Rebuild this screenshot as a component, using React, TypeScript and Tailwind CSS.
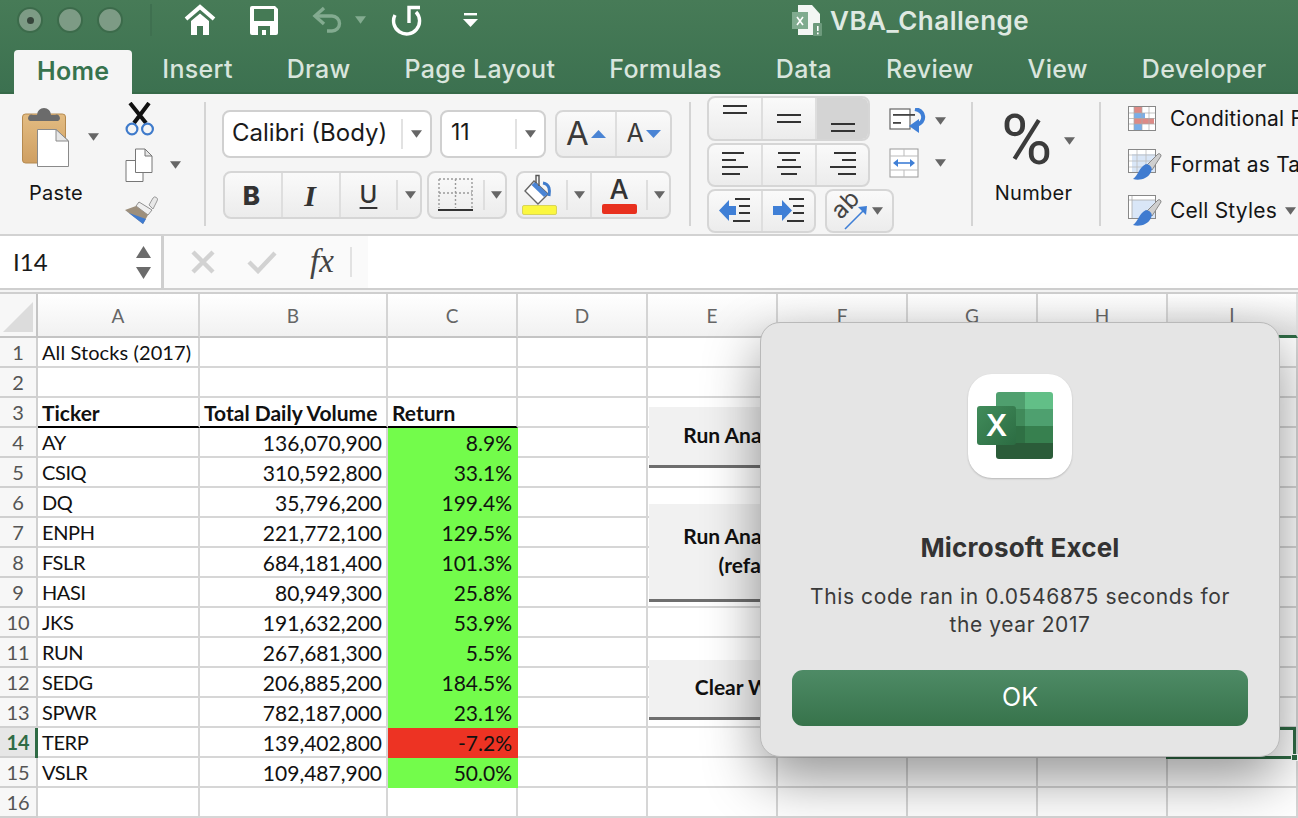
import React from "react";

const ui = "font-['Inter','Liberation_Sans',sans-serif]";
const btn = "flex border-2 border-[#d6d6d6] rounded-[8px] bg-gradient-to-b from-[#fafafa] to-[#ececec]";
const seg = "flex items-center justify-center border-r-2 border-[#dedede] h-full";

function Caret({ c = "#666666", w = 11, h = 8 }: { c?: string; w?: number; h?: number }) {
  return (
    <svg width={w} height={h} viewBox="0 0 10 7" className="shrink-0">
      <path d="M0 0H10L5 7Z" fill={c} />
    </svg>
  );
}

function Home() {
  return (
    <svg width="34" height="32" viewBox="0 0 34 32">
      <path d="M3 15L17 3L31 15" stroke="#fff" strokeWidth="4" fill="none" />
      <path d="M8 17L17 9.5L26 17V31H20V22H14V31H8Z" fill="#fff" />
    </svg>
  );
}
function Save() {
  return (
    <svg width="28" height="29" viewBox="0 0 28 29">
      <path d="M2 0H25L28 3V27A2 2 0 0 1 26 29H2A2 2 0 0 1 0 27V2A2 2 0 0 1 2 0Z" fill="#fff" />
      <rect x="4" y="3" width="20" height="12" fill="#457a55" />
      <path d="M8 29V20H20V29H16V24H12V29Z" fill="#457a55" />
    </svg>
  );
}
function Undo() {
  return (
    <svg width="32" height="28" viewBox="0 0 32 28" fill="none" stroke="#83ab90" strokeWidth="3.4">
      <path d="M12 2L3 10L12 18" />
      <path d="M3 10H20A7.5 7.5 0 0 1 20 25H15" />
    </svg>
  );
}
function Redo() {
  return (
    <svg width="32" height="32" viewBox="0 0 32 32" fill="none" stroke="#fff" strokeWidth="3.4">
      <path d="M4 11A13 13 0 1 0 25 8" />
      <path d="M18 19L18 3.5H29" />
    </svg>
  );
}
function Customize() {
  return (
    <svg width="15" height="15" viewBox="0 0 15 15" fill="#fff">
      <rect x="1" y="0" width="13" height="2.4" />
      <path d="M0 6H15L7.5 14Z" />
    </svg>
  );
}
function DocIcon() {
  return (
    <svg width="32" height="32" viewBox="0 0 32 32">
      <path d="M6 0H20L28 9V30H6Z" fill="#f3f6f4" />
      <rect x="0" y="7" width="16" height="17" fill="#80ab8f" />
      <path d="M5 12L11 20M11 12L5 20" stroke="#fff" strokeWidth="1.6" />
      <rect x="21" y="18" width="9" height="13" rx="1" fill="#6d9a7c" />
      <rect x="25" y="21" width="1.6" height="5" fill="#fff" />
      <rect x="25" y="27.5" width="1.6" height="1.8" fill="#fff" />
    </svg>
  );
}
function Clipboard() {
  return (
    <svg width="48" height="60" viewBox="0 0 48 60">
      <defs>
        <linearGradient id="cb" x1="0" y1="0" x2="0" y2="1">
          <stop offset="0" stopColor="#e3bc82" />
          <stop offset="1" stopColor="#cf9f62" />
        </linearGradient>
      </defs>
      <rect x="0.5" y="7" width="43" height="49" rx="3" fill="url(#cb)" stroke="#b58a50" />
      <path d="M8 14A3 3 0 0 1 11 8H15A7 7 0 0 1 29 8H33A3 3 0 0 1 36 14Z" fill="#6b6b6b" />
      <path d="M15.5 22.5H34L46.5 34V59.5H15.5Z" fill="#fff" stroke="#8a8a8a" />
      <path d="M34 22.5V34H46.5Z" fill="#e6e6e6" stroke="#8a8a8a" />
    </svg>
  );
}
function Scissors() {
  return (
    <svg width="30" height="34" viewBox="0 0 30 34" fill="none">
      <path d="M5 1L21 21M24 1L9 21" stroke="#111" strokeWidth="4" />
      <circle cx="7" cy="27" r="5.4" stroke="#3f7bcb" strokeWidth="2.2" />
      <circle cx="22.5" cy="27" r="5.4" stroke="#3f7bcb" strokeWidth="2.2" />
    </svg>
  );
}
function Copy() {
  return (
    <svg width="28" height="34" viewBox="0 0 28 34">
      <path d="M1 12.5H14L18 16V33.5H1Z" fill="#fff" stroke="#777" />
      <path d="M10.5 1H20L27 8V24.5H10.5Z" fill="#fff" stroke="#777" />
      <path d="M20 1V8H27Z" fill="#e6e6e6" stroke="#777" />
    </svg>
  );
}
function Brush() {
  return (
    <svg width="34" height="30" viewBox="0 0 34 30">
      <path d="M25 10L29 3A2.5 2.5 0 0 1 33 6L29 14Z" fill="#e8e8e8" stroke="#9a9a9a" />
      <path d="M15 7L28 15L24 20L12 11Z" fill="#efefef" stroke="#8f8f8f" />
      <path d="M12 11L24 20L19 29L1 15Z" fill="#9d8f7c" />
      <path d="M5 18L22 24L19 29L1 15Z" fill="#3f7bd0" />
    </svg>
  );
}
function Borders() {
  return (
    <svg width="35" height="34" viewBox="0 0 35 34" fill="none">
      <path d="M1 1H34V30M1 1V30M17.5 1V30M1 15H34" stroke="#9a9a9a" strokeWidth="1.4" strokeDasharray="2 2" />
      <rect x="0" y="31" width="35" height="2" fill="#333" />
    </svg>
  );
}
function Bucket() {
  return (
    <svg width="36" height="36" viewBox="0 0 36 36">
      <path d="M13 7L27 20L17 30L4 17Z" fill="#fff" stroke="#666" strokeWidth="1.4" />
      <path d="M10.5 11L23 23L27 20L14 8Z" fill="#4a84d4" />
      <path d="M15 9L15 1.5H18V12" fill="none" stroke="#555" strokeWidth="1.4" />
      <path d="M22 9C29 10 29 17 28 22" stroke="#3f7bcb" strokeWidth="3" fill="none" />
    </svg>
  );
}
function AlignV({ y }: { y: number }) {
  return (
    <svg width="28" height="34" viewBox="0 0 28 34" fill="#333">
      <rect x="2" y={y} width="24" height="2" />
      <rect x="2" y={y + 7} width="24" height="2" />
    </svg>
  );
}
function AlignH({ a }: { a: number[][] }) {
  return (
    <svg width="28" height="30" viewBox="0 0 28 30" fill="#333">
      {a.map(([x, w], i) => (
        <rect key={i} x={x} y={2 + i * 7} width={w} height="2" />
      ))}
    </svg>
  );
}
function Indent({ flip }: { flip?: boolean }) {
  return (
    <svg width="32" height="28" viewBox="0 0 32 28">
      <path d={flip ? "M9 3L19 13.5L9 24V18H0V9H9Z" : "M10 3L0 13.5L10 24V18H17V9H10Z"} fill="#3f7fd6" />
      <g fill="#333">
        <rect x="16" y="1" width="15" height="2" />
        <rect x="20" y="8" width="11" height="2" />
        <rect x="20" y="15" width="11" height="2" />
        <rect x="14" y="23" width="17" height="2" />
      </g>
    </svg>
  );
}
function Orientation() {
  return (
    <svg width="36" height="38" viewBox="0 0 36 38" fill="none" className="overflow-visible">
      <text x="12" y="20" textAnchor="middle" fontSize="24" fill="#444" transform="rotate(-45 12 13)" className="font-['Inter',sans-serif]">ab</text>
      <path d="M11 37L31 17" stroke="#3f7fd6" strokeWidth="1.6" />
      <path d="M24 15L33 14L32 23Z" fill="#3f7fd6" />
    </svg>
  );
}
function Wrap() {
  return (
    <svg width="38" height="26" viewBox="0 0 38 26" fill="none">
      <rect x="1" y="1" width="20" height="20" fill="#fff" stroke="#666" strokeWidth="1.2" />
      <rect x="4" y="6" width="22" height="1.8" fill="#444" />
      <rect x="4" y="14" width="8" height="1.8" fill="#444" />
      <path d="M26 1C36 3 37 13 28 17" stroke="#3f7fd6" strokeWidth="4" />
      <path d="M30 11L20 18L30 25Z" fill="#3f7fd6" />
    </svg>
  );
}
function Merge() {
  return (
    <svg width="30" height="30" viewBox="0 0 30 30" fill="none">
      <rect x="1" y="1" width="28" height="28" fill="#fff" stroke="#999" />
      <path d="M15 1V8M15 22V29M1 8H29M1 22H29" stroke="#bbb" />
      <path d="M6 15H24" stroke="#3f7fd6" strokeWidth="1.6" />
      <path d="M9 11L4 15L9 19ZM21 11L26 15L21 19Z" fill="#3f7fd6" />
    </svg>
  );
}
function Conditional() {
  return (
    <svg width="30" height="26" viewBox="0 0 30 26" fill="none">
      <rect x="0.5" y="0.5" width="27" height="24" fill="#fff" stroke="#888" />
      <rect x="6" y="1" width="8" height="6" fill="#dd8a86" />
      <rect x="6" y="7" width="11" height="6" fill="#7aaee8" />
      <rect x="6" y="12" width="20" height="6" fill="#dd8a86" />
      <rect x="6" y="18" width="8" height="6" fill="#7aaee8" />
      <path d="M6 1V24M14 1V24M21 1V24M1 7H27M1 12.5H27M1 18H27" stroke="#aaa" strokeWidth="0.7" />
    </svg>
  );
}
function TableBrush({ grid }: { grid?: boolean }) {
  return (
    <svg width="34" height="32" viewBox="0 0 34 32" fill="none">
      <rect x="0.5" y="0.5" width="27" height="23" fill="#fff" stroke="#888" />
      <rect x="4" y="5" width="23" height="18" fill="#d9e6f7" />
      {grid ? <path d="M9 1V23M18 1V23M1 6H27M1 12H27M1 18H27" stroke="#bbb" strokeWidth="0.8" /> : <path d="M1 5H27M4 1V23" stroke="#aaa" strokeWidth="0.8" />}
      <path d="M19 16L30 5A2 2 0 0 1 33 7L24 21Z" fill="#cfcfcf" stroke="#888" />
      <path d="M18 15C23 16 25 19 23 23C20 30 11 32 5 30C10 27 11 18 18 15Z" fill="#3f7bd0" />
    </svg>
  );
}
function ExcelIcon() {
  return (
    <svg width="104" height="104" viewBox="0 0 104 104">
      <defs>
        <linearGradient id="xb" x1="0" y1="0" x2="1" y2="1">
          <stop offset="0" stopColor="#418c5b" />
          <stop offset="1" stopColor="#2c6c42" />
        </linearGradient>
      </defs>
      <path d="M31 18H57V35H28V21A3 3 0 0 1 31 18Z" fill="#4f9f6e" />
      <path d="M57 18H82A3 3 0 0 1 85 21V35H57Z" fill="#62bf87" />
      <rect x="28" y="35" width="29" height="17" fill="#408a5a" />
      <rect x="57" y="35" width="28" height="17" fill="#4ea06f" />
      <rect x="28" y="52" width="29" height="17" fill="#2f7044" />
      <rect x="57" y="52" width="28" height="17" fill="#37804f" />
      <path d="M28 69H85V82A3 3 0 0 1 82 85H31A3 3 0 0 1 28 82Z" fill="#2b5c39" />
      <rect x="9" y="32" width="39" height="39" rx="3" fill="url(#xb)" />
      <text x="28.5" y="62" textAnchor="middle" fontSize="30" fontWeight="600" fill="#fff" className="font-['Inter',sans-serif]">X</text>
    </svg>
  );
}

const tabs = ["Insert", "Draw", "Page Layout", "Formulas", "Data", "Review", "View", "Developer"];
const cols = ["A", "B", "C", "D", "E", "F", "G", "H", "I"];
const data: [string, string, string][] = [
  ["AY", "136,070,900", "8.9%"],
  ["CSIQ", "310,592,800", "33.1%"],
  ["DQ", "35,796,200", "199.4%"],
  ["ENPH", "221,772,100", "129.5%"],
  ["FSLR", "684,181,400", "101.3%"],
  ["HASI", "80,949,300", "25.8%"],
  ["JKS", "191,632,200", "53.9%"],
  ["RUN", "267,681,300", "5.5%"],
  ["SEDG", "206,885,200", "184.5%"],
  ["SPWR", "782,187,000", "23.1%"],
  ["TERP", "139,402,800", "-7.2%"],
  ["VSLR", "109,487,900", "50.0%"],
];
const cell = "border-r-2 border-b-2 border-[#d6d6d6] flex items-center px-[4px] whitespace-nowrap overflow-hidden";

function rowCells(r: number) {
  const out: React.ReactNode[] = [];
  const selected = r === 14;
  out.push(
    <div key={`h${r}`} className={`relative border-r-2 border-b-2 border-[#d0d0d0] flex items-center justify-center ${selected ? "bg-[#e6e6e6] text-[#2f6b45] font-bold" : "bg-[#f7f7f7] text-[#555]"}`}>
      {r}
      {selected && <span className="absolute right-[-2px] top-0 bottom-[-2px] w-[3px] bg-[#2f6b45]" />}
    </div>
  );
  for (let c = 0; c < 9; c++) {
    let text = "";
    let cls = cell;
    if (r === 1 && c === 0) {
      text = "All Stocks (2017)";
      cls += " tracking-[0.1px]";
    }
    if (r === 3 && c < 3) {
      text = ["Ticker", "Total Daily Volume", "Return"][c];
      cls += " font-bold border-b-black text-[21px]";
    }
    if (r >= 4 && r <= 15 && c < 3) {
      text = data[r - 4][c];
      if (c === 0) cls += " tracking-[-0.4px]";
      if (c > 0) cls += " justify-end text-[21px]";
      if (c === 2) cls = cls.replace("border-[#d6d6d6]", r === 14 ? "border-[#ed3323] bg-[#ed3323]" : "border-[#73fc4b] bg-[#73fc4b]");
    }
    out.push(
      <div key={`${r}-${c}`} className={cls}>
        {text}
      </div>
    );
  }
  return out;
}

function SheetButton({ cls, children }: { cls: string; children: React.ReactNode }) {
  return (
    <div className={`absolute left-[649px] w-[248px] flex items-center justify-center text-center font-bold bg-[#f1f1f1] border-b-[3px] border-[#6e6e6e] leading-[29px] text-[#111] whitespace-nowrap ${cls}`}>
      <div>{children}</div>
    </div>
  );
}

export default function App() {
  return (
    <div className={`relative w-[1298px] h-[818px] overflow-hidden bg-white text-[#111] ${ui}`}>
      {/* Window chrome */}
      <div className="h-[94px] bg-gradient-to-b from-[#477b57] to-[#3c7150] border-b-2 border-[#376a49]">
        <div className="flex h-[47px] items-center pl-[17px]">
          <div className="flex gap-[14px] -mt-[7px]">
            <div className="w-[26px] h-[26px] rounded-full bg-[#7d9b85] border-2 border-[#3c6b4b] flex items-center justify-center">
              <span className="w-[7px] h-[7px] rounded-full bg-[#36453b]" />
            </div>
            <div className="w-[26px] h-[26px] rounded-full bg-[#7d9b85] border-2 border-[#3c6b4b]" />
            <div className="w-[26px] h-[26px] rounded-full bg-[#7d9b85] border-2 border-[#3c6b4b]" />
          </div>
          <div className="w-[2px] h-[32px] bg-[#3f7050] ml-[27px] -mt-[7px]" />
          <div className="flex items-center ml-[31px] -mt-[7px]">
            <Home />
            <div className="ml-[33px]"><Save /></div>
            <div className="ml-[34px]"><Undo /></div>
            <div className="ml-[11px]"><Caret c="#83ab90" /></div>
            <div className="ml-[25px]"><Redo /></div>
            <div className="ml-[40px]"><Customize /></div>
          </div>
          <div className="flex items-center ml-[314px] -mt-[6px] gap-[6px]">
            <DocIcon />
            <span className="text-[26px] font-semibold text-[#dfe9e2] tracking-[0.5px]">VBA_Challenge</span>
          </div>
        </div>
        <div className="flex h-[45px] items-end pl-[14px] text-[25px] font-medium tracking-[0.3px]">
          <div className="h-[44px] -mb-[2px] px-[23px] bg-[#f5f5f5] rounded-t-[4px] text-[#37734e] font-semibold flex items-center">Home</div>
          <div className="flex gap-[54px] ml-[30px] h-[44px] items-center text-[#d9e5dd] whitespace-nowrap">
            {tabs.map((t) => (
              <span key={t}>{t}</span>
            ))}
          </div>
        </div>
      </div>

      {/* Ribbon */}
      <div className="flex h-[142px] bg-[#f5f5f5] border-b-2 border-[#d2d2d2] text-[20px] text-[#151515] overflow-hidden tracking-[0.3px]">
        {/* Clipboard */}
        <div className="w-[204px] flex shrink-0">
          <div className="w-[112px] flex flex-col">
            <div className="flex items-center pl-[22px] pt-[13px]">
              <Clipboard />
              <div className="ml-[18px]"><Caret /></div>
            </div>
            <div className="pl-[29px] mt-[11px]">Paste</div>
          </div>
          <div className="flex flex-col pt-[8px] pl-[13px]">
            <Scissors />
            <div className="flex items-center mt-[12px]">
              <Copy />
              <div className="ml-[17px]"><Caret /></div>
            </div>
            <div className="mt-[13px] -ml-[1px]"><Brush /></div>
          </div>
        </div>
        <div className="w-[2px] my-[8px] bg-[#d4d4d4] shrink-0" />

        {/* Font */}
        <div className="w-[483px] shrink-0 pl-[16px] pt-[16px] flex flex-col gap-[13px] tracking-normal">
          <div className="flex h-[48px]">
            <div className="w-[210px] flex items-center justify-between border-2 border-[#d0d0d0] rounded-[8px] bg-white pl-[8px] text-[#1a1a1a]">
              <span className="text-[24px] -mt-[3px]">Calibri (Body)</span>
              <span className="flex items-center h-[30px] border-l-2 border-[#e2e2e2] pl-[8px] pr-[8px]"><Caret /></span>
            </div>
            <div className="w-[106px] ml-[8px] flex items-center justify-between border-2 border-[#d0d0d0] rounded-[8px] bg-white pl-[9px] text-[23px] text-[#1a1a1a]">
              <span className="-mt-[3px]">11</span>
              <span className="flex items-center h-[30px] border-l-2 border-[#e2e2e2] pl-[8px] pr-[8px]"><Caret /></span>
            </div>
            <div className={`${btn} w-[117px] ml-[9px]`}>
              <div className={`${seg} w-[60px] gap-[2px] text-[#3a3a3a] text-[33px]`}>
                <span>A</span>
                <svg width="15" height="8" viewBox="0 0 15 8"><path d="M7.5 0L15 8H0Z" fill="#4a84d4" /></svg>
              </div>
              <div className="flex items-center justify-center flex-1 gap-[2px] text-[#3a3a3a] text-[25px]">
                <span>A</span>
                <svg width="15" height="8" viewBox="0 0 15 8"><path d="M0 0H15L7.5 8Z" fill="#4a84d4" /></svg>
              </div>
            </div>
          </div>
          <div className="flex h-[48px]">
            <div className={`${btn} w-[199px] ml-[1px]`}>
              <div className={`${seg} w-[58px] pr-[3px] text-[26px] font-extrabold text-[#333]`}>B</div>
              <div className={`${seg} w-[58px] pr-[2px] text-[30px] italic font-semibold font-['Liberation_Serif',serif] text-[#333]`}>I</div>
              <div className="flex items-center justify-center w-[55px] text-[24px] font-medium underline underline-offset-[4px] text-[#333]">U</div>
              <div className="flex items-center h-[30px] self-center border-l-2 border-[#dedede] pl-[7px]"><Caret /></div>
            </div>
            <div className={`${btn} w-[80px] ml-[5px] items-center`}>
              <div className="w-[54px] flex justify-center pr-[2px]"><Borders /></div>
              <div className="flex items-center h-[30px] border-l-2 border-[#dedede] pl-[6px]"><Caret /></div>
            </div>
            <div className={`${btn} w-[155px] ml-[9px] items-center`}>
              <div className="w-[48px] flex flex-col items-center pr-[6px]">
                <div className="-mt-[2px] h-[30px]"><Bucket /></div>
                <div className="w-[35px] h-[10px] mt-[1px] bg-[#fbf73f] border border-[#d8d45a] rounded-[2px]" />
              </div>
              <div className="flex items-center h-[30px] border-l-2 border-[#dedede] pl-[6px] w-[24px]"><Caret /></div>
              <div className="w-[2px] h-full bg-[#dedede]" />
              <div className="w-[54px] flex flex-col items-center text-[27px] leading-[28px] text-[#333]">
                <span className="font-medium">A</span>
                <div className="w-[35px] h-[10px] bg-[#e8301e] rounded-[2px]" />
              </div>
              <div className="flex items-center h-[30px] border-l-2 border-[#dedede] pl-[6px]"><Caret /></div>
            </div>
          </div>
        </div>
        <div className="w-[2px] my-[8px] bg-[#d4d4d4] shrink-0" />

        {/* Alignment */}
        <div className="w-[280px] shrink-0 pl-[16px] pt-[2px] flex flex-col">
          <div className="flex">
            <div className="flex flex-col gap-[2px]">
              <div className={`${btn} w-[163px] h-[45px]`}>
                <div className={`${seg} w-[54px]`}><AlignV y={3} /></div>
                <div className={`${seg} w-[54px]`}><AlignV y={12} /></div>
                <div className="flex items-center justify-center flex-1 bg-[#d4d4d4] rounded-r-[6px]"><AlignV y={21} /></div>
              </div>
              <div className={`${btn} w-[163px] h-[44px]`}>
                <div className={`${seg} w-[54px]`}><AlignH a={[[1, 22], [1, 14], [1, 26], [1, 18]]} /></div>
                <div className={`${seg} w-[54px]`}><AlignH a={[[3, 22], [7, 14], [2, 24], [6, 16]]} /></div>
                <div className="flex items-center justify-center flex-1"><AlignH a={[[5, 22], [13, 14], [1, 26], [9, 18]]} /></div>
              </div>
            </div>
            <div className="flex flex-col ml-[19px] pt-[12px]">
              <div className="flex items-center">
                <Wrap />
                <div className="ml-[8px]"><Caret /></div>
              </div>
              <div className="flex items-center mt-[14px]">
                <div className="w-[38px]"><Merge /></div>
                <div className="ml-[8px]"><Caret /></div>
              </div>
            </div>
          </div>
          <div className="flex mt-[2px]">
            <div className={`${btn} w-[109px] h-[44px]`}>
              <div className={`${seg} w-[54px]`}><Indent /></div>
              <div className="flex items-center justify-center flex-1"><Indent flip /></div>
            </div>
            <div className={`${btn} w-[69px] h-[44px] ml-[9px] items-center pl-[7px]`}>
              <Orientation />
              <div className="ml-[2px]"><Caret /></div>
            </div>
          </div>
        </div>
        <div className="w-[2px] my-[8px] bg-[#d4d4d4] shrink-0" />

        {/* Number */}
        <div className="w-[126px] shrink-0 flex flex-col">
          <div className="flex items-center pl-[28px] h-[80px] pt-[11px]">
            <span className="font-['Roboto',sans-serif] text-[70px] leading-none text-[#3b3b3b]">%</span>
            <div className="ml-[11px] mt-[2px]"><Caret /></div>
          </div>
          <div className="text-center pr-[5px] mt-[4px]">Number</div>
        </div>
        <div className="w-[2px] my-[8px] bg-[#d4d4d4] shrink-0" />

        {/* Styles */}
        <div className="flex-1 pl-[27px] pt-[10px] flex flex-col gap-[15px] whitespace-nowrap text-[21px] tracking-[0.2px]">
          <div className="flex items-center h-[30px] gap-[12px]"><Conditional /><span>Conditional Formatting</span></div>
          <div className="flex items-center h-[32px] gap-[8px]"><TableBrush grid /><span>Format as Table</span></div>
          <div className="flex items-center h-[30px] gap-[8px]"><TableBrush /><span>Cell Styles</span><Caret /></div>
        </div>
      </div>

      {/* Formula bar */}
      <div className="flex h-[52px] bg-white">
        <div className="w-[164px] flex items-center justify-between bg-white pl-[13px] pr-[10px] text-[24px] text-[#1a1a1a] font-['Lato',sans-serif] border-r-[3px] border-[#cfcfcf]">
          <span>I14</span>
          <div className="flex flex-col gap-[9px]">
            <svg width="15" height="12" viewBox="0 0 15 12"><path d="M7.5 0L15 12H0Z" fill="#6b6b6b" /></svg>
            <svg width="15" height="12" viewBox="0 0 15 12"><path d="M0 0H15L7.5 12Z" fill="#6b6b6b" /></svg>
          </div>
        </div>
        <div className="w-[204px] flex items-center bg-[#fafafa] pl-[27px]">
          <svg width="24" height="24" viewBox="0 0 24 24"><path d="M2 2L22 22M22 2L2 22" stroke="#d2d2d2" strokeWidth="4.4" /></svg>
          <svg width="30" height="24" viewBox="0 0 30 24" className="ml-[32px]"><path d="M2 12L11 21L28 3" stroke="#d2d2d2" strokeWidth="4.4" fill="none" /></svg>
          <span className="ml-[33px] font-['Liberation_Serif',serif] italic text-[33px] text-[#444]">fx</span>
          <div className="w-[2px] h-[30px] bg-[#e2e2e2] ml-[16px]" />
        </div>
        <div className="flex-1" />
      </div>
      <div className="h-[6px] bg-[#f4f4f4] border-y-2 border-[#cfcfcf]" />

      {/* Sheet */}
      <div className="grid grid-cols-[38px_162px_188px_130px_130px_130px_130px_130px_130px_130px] grid-rows-[44px_repeat(16,30px)] font-['Lato',sans-serif] text-[20px] leading-none">
        <div className="relative bg-[#f7f7f7] border-r-2 border-b-2 border-[#c4c4c4]">
          <svg width="30" height="30" viewBox="0 0 30 30" className="absolute left-[3px] top-[8px]">
            <path d="M30 0V30H0Z" fill="#dcdcdc" />
          </svg>
        </div>
        {cols.map((c) => (
          <div key={c} className={`flex items-center justify-center text-[19px] text-[#666] border-r-2 border-b-2 bg-gradient-to-b from-white ${c === "I" ? "to-[#e2e2e2] border-b-[#2f6b45] border-b-[3px] border-r-[#e0e0e0] text-[#2f6b45]" : "to-[#f1f1f1] border-[#d4d4d4] border-b-[#c4c4c4]"}`}>
            {c}
          </div>
        ))}
        {Array.from({ length: 16 }, (_, i) => rowCells(i + 1))}
      </div>

      {/* Objects on top of the sheet */}
      <div className="font-['Lato',sans-serif] text-[21px]">
        <SheetButton cls="top-[407px] h-[61px] pb-[4px]">Run Analysis for All</SheetButton>
        <SheetButton cls="top-[504px] h-[98px] pb-[3px]">Run Analysis for All<br />(refactored)</SheetButton>
        <SheetButton cls="top-[660px] h-[60px] pb-[5px]">Clear Worksheet</SheetButton>
        <div className="absolute left-[1166px] top-[727px] w-[130px] h-[32px] border-[3px] border-[#2f6b45]" />
        <div className="absolute left-[1291px] top-[754px] w-[7px] h-[7px] bg-[#2f6b45] border border-white" />
      </div>

      {/* Dialog */}
      <div className="absolute left-[760px] top-[322px] w-[520px] h-[435px] rounded-[20px] bg-[#e5e5e5] border border-[#b9b9b9] shadow-[0_22px_55px_rgba(0,0,0,0.42)] flex flex-col items-center px-[32px] pt-[51px] text-[#2e2e2e]">
        <div className="w-[104px] h-[104px] shrink-0 rounded-[24px] bg-white shadow-[0_1px_2px_rgba(0,0,0,0.2)]">
          <ExcelIcon />
        </div>
        <div className="mt-[54px] text-[26px] font-bold leading-[32px] tracking-[0.2px] text-[#333]">Microsoft Excel</div>
        <div className="mt-[19px] text-[21px] leading-[28px] text-center tracking-[0.6px] text-[#3a3a3a]">
          This code ran in 0.0546875 seconds for<br />the year 2017
        </div>
        <div className="mt-[31px] w-[456px] h-[56px] shrink-0 rounded-[11px] bg-gradient-to-b from-[#4e8b66] to-[#37734b] text-white text-[25px] flex items-center justify-center">
          OK
        </div>
      </div>
    </div>
  );
}
